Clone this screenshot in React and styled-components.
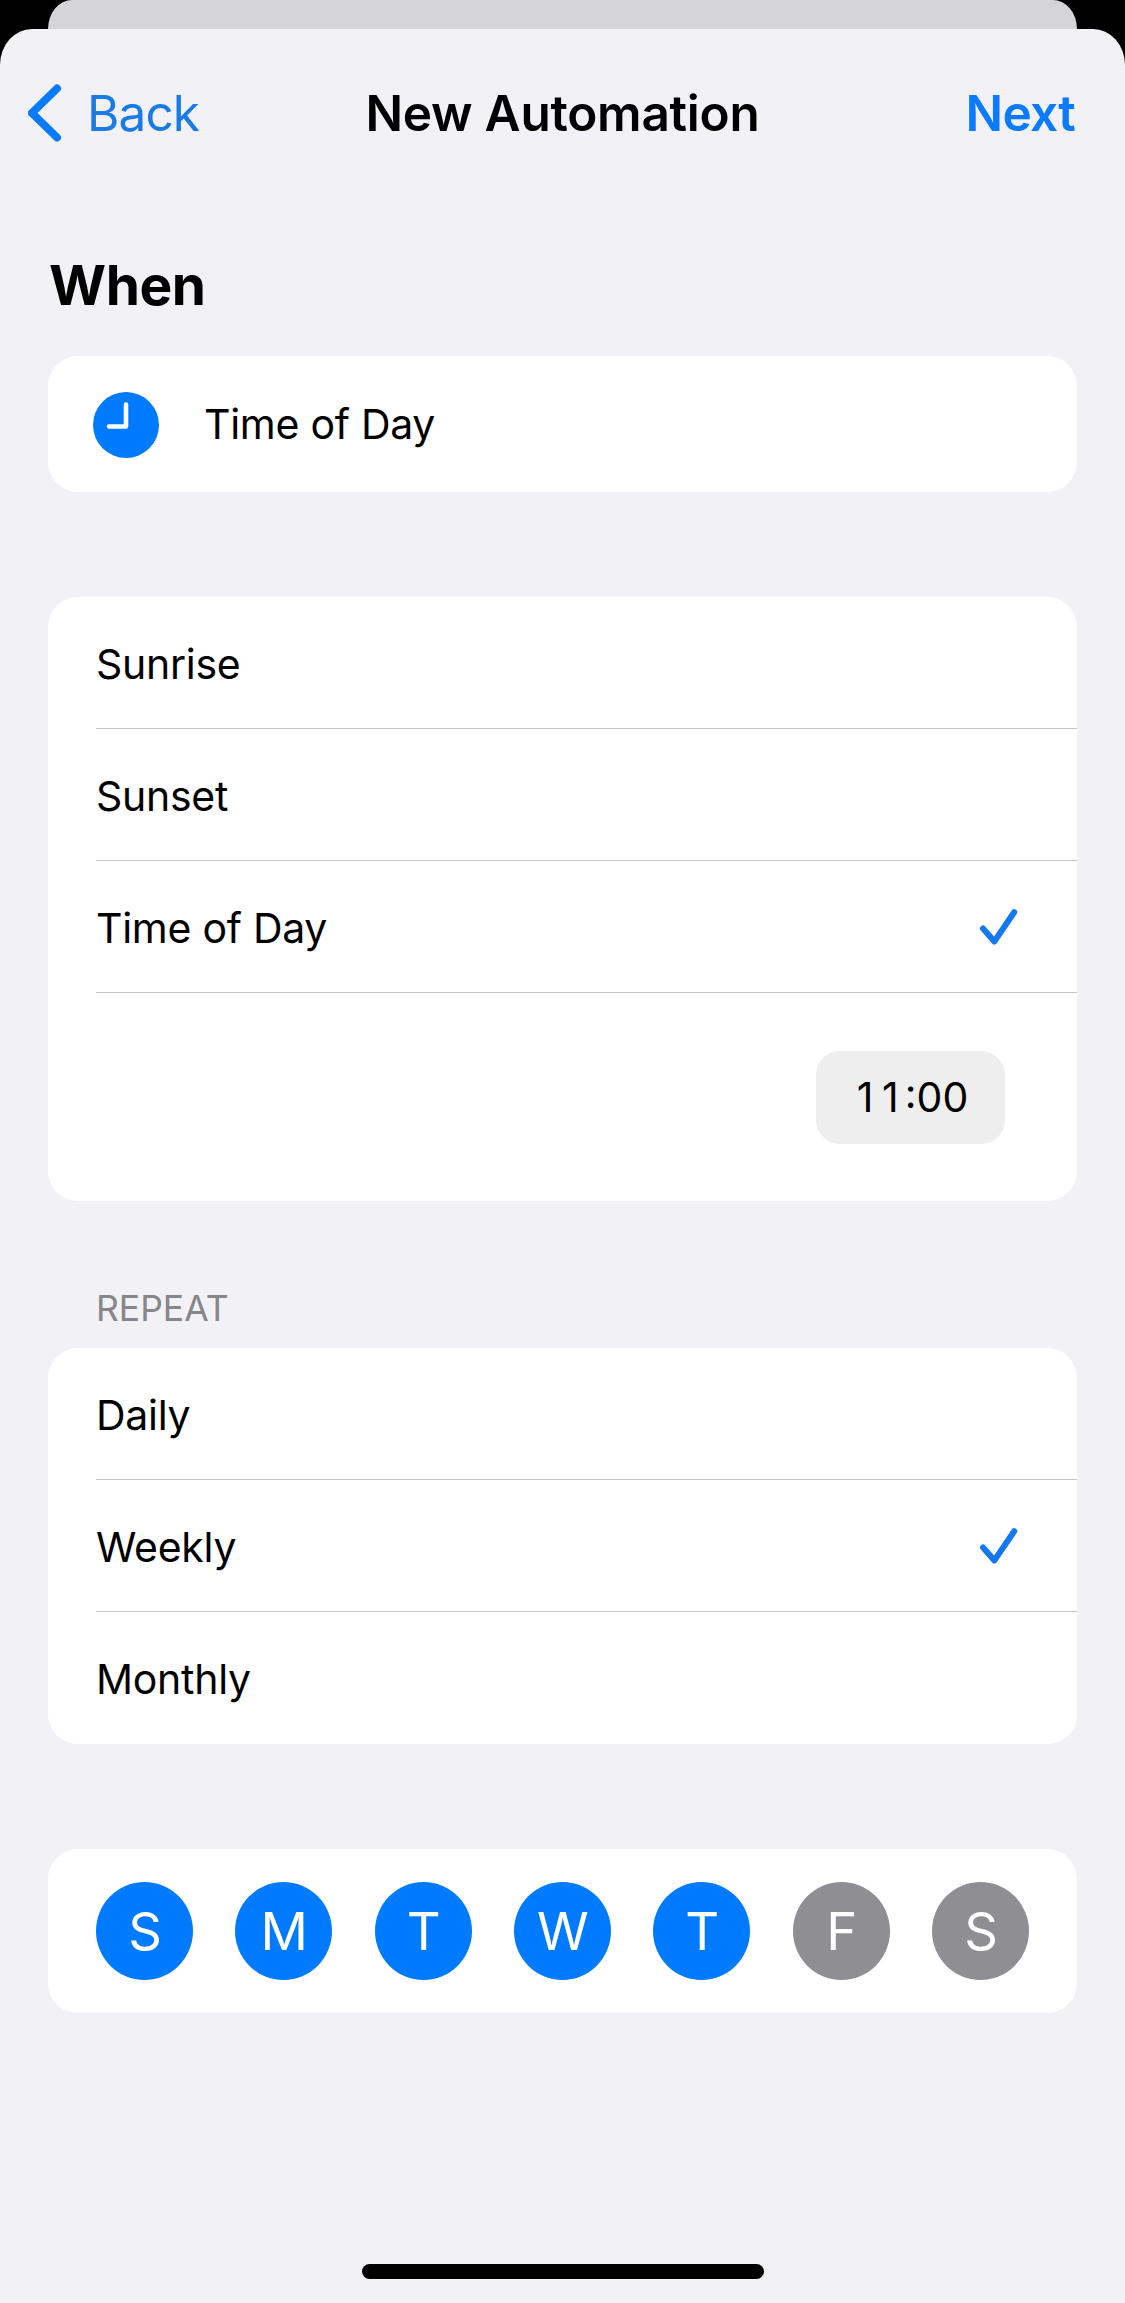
import React, { useState } from 'react'
import styled, { createGlobalStyle } from 'styled-components'

const GlobalStyle = createGlobalStyle`
  * {
    box-sizing: border-box;
  }
  body {
    margin: 0;
    background: #000;
    color: #000;
    font-family: Inter, 'Liberation Sans', sans-serif;
  }
  button {
    margin: 0;
    padding: 0;
    border: 0;
    background: none;
    color: inherit;
    font: inherit;
  }
`

// Layout
const Screen = styled.div`
  display: flex;
  flex-direction: column;
  width: 1125px;
  height: 2303px;
  overflow: hidden;
`

const BackSheet = styled.div`
  flex: none;
  height: 29px;
  margin: 0 48px;
  background: #d5d4d9;
  border-radius: 24px 24px 0 0 / 29px 29px 0 0;
`

const Sheet = styled.div`
  display: flex;
  flex-direction: column;
  flex: 1;
  background: #f2f1f6;
  border-radius: 32px 32px 0 0 / 36px 36px 0 0;
`

const Content = styled.main`
  flex: 1;
  padding: 0 48px;
`

// Header
const NavBar = styled.header`
  display: grid;
  grid-template-columns: 1fr auto 1fr;
  align-items: center;
  height: 168px;
  padding: 0 50px 0 28px;
  font-size: 49.5px;
  line-height: 60px;
`

const BackButton = styled.button`
  display: flex;
  align-items: center;
  gap: 25px;
  color: #1a7ae8;
  letter-spacing: -0.9px;
`

const NavTitle = styled.h1`
  margin: 0;
  padding-left: 22px;
  font-size: inherit;
  font-weight: 600;
  letter-spacing: -0.24px;
`

const NextButton = styled.button`
  justify-self: end;
  color: #0a7aff;
  font-weight: 600;
  letter-spacing: -0.7px;
`

// Sections
const SectionTitle = styled.h2`
  margin: 0;
  padding: 54px 1px 37px;
  font-size: 55px;
  font-weight: 700;
  line-height: 68px;
  letter-spacing: -0.4px;
`

const GroupLabel = styled.h3`
  margin: 0;
  padding: 86px 48px 17px;
  color: #86868b;
  font-size: 35.5px;
  font-weight: 400;
  line-height: 44px;
`

const Card = styled.section`
  margin-bottom: ${props => props.$gap || 0}px;
  background: #fff;
  border-radius: 30px;
  font-size: 41px;
  line-height: 50px;
  letter-spacing: -0.27px;
`

const Trigger = styled.div`
  display: flex;
  align-items: center;
  gap: 45px;
  height: 136px;
  padding-left: 45px;

  svg {
    margin-top: 2px;
  }
`

const Row = styled.button`
  display: flex;
  align-items: center;
  justify-content: space-between;
  width: 981px;
  height: 132px;
  margin-left: 48px;
  padding: 3px 59px 0 0;
  border-bottom: 1px solid ${props => (props.$last ? 'transparent' : '#c6c6c8')};
  letter-spacing: inherit;

  svg {
    margin-bottom: 2px;
  }
`

const TimeRow = styled.div`
  display: flex;
  align-items: center;
  justify-content: flex-end;
  height: 208px;
  padding: 1px 72px 0 0;
`

const TimePill = styled.button`
  width: 189px;
  height: 93px;
  padding: 0 0 1px 4px;
  background: #eee;
  border-radius: 24px;
  letter-spacing: 0;
  text-align: center;
  font-feature-settings: 'case' 1;
`

// Spaces the narrow ones out to the width of the other digits
const Hours = styled.span`
  letter-spacing: 8.6px;
  margin-right: -2.4px;
`

const Days = styled.div`
  display: flex;
  align-items: center;
  justify-content: space-between;
  height: 164px;
  padding: 0 48px;
`

const Day = styled.button`
  width: 97px;
  height: 98px;
  padding-left: 1px;
  border-radius: 50%;
  background: ${props => (props.$on ? '#007aff' : '#8e8e93')};
  color: #fff;
  font-size: 52.5px;
  line-height: 98px;
  letter-spacing: 0;
  text-align: center;
`

const HomeIndicator = styled.div`
  align-self: center;
  width: 402px;
  height: 15px;
  margin-bottom: 24px;
  background: #000;
  border-radius: 8px;
`

// Icons
const ChevronIcon = () => (
  <svg width="34" height="58" viewBox="0 0 34 58" fill="none">
    <path
      d="M29 4.5 3.9 29 29 53.5"
      stroke="#0a7aff"
      strokeWidth="8"
      strokeLinecap="round"
      strokeLinejoin="round"
    />
  </svg>
)

const ClockIcon = () => (
  <svg width="66" height="66" viewBox="0 0 66 66" fill="none">
    <circle cx="33" cy="33" r="33" fill="#007aff" />
    <path d="M33 12.5V34.5H16" stroke="#fff" strokeWidth="4.6" strokeLinecap="round" strokeLinejoin="round" />
  </svg>
)

const CheckIcon = () => (
  <svg width="38" height="38" viewBox="0 0 38 38" fill="none">
    <path
      d="M3 20.5 14.4 33.4 34.2 4.2"
      stroke="#1478f0"
      strokeWidth="6"
      strokeLinecap="round"
      strokeLinejoin="round"
    />
  </svg>
)

const times = ['Sunrise', 'Sunset', 'Time of Day']
const repeats = ['Daily', 'Weekly', 'Monthly']
const days = ['S', 'M', 'T', 'W', 'T', 'F', 'S']

const App = () => {
  const [time, setTime] = useState('Time of Day')
  const [repeat, setRepeat] = useState('Weekly')
  const [active, setActive] = useState([0, 1, 2, 3, 4])

  const toggleDay = i => setActive(active.includes(i) ? active.filter(d => d !== i) : [...active, i])

  return (
    <Screen>
      <GlobalStyle />
      <BackSheet />
      <Sheet>
        <NavBar>
          <BackButton>
            <ChevronIcon />
            Back
          </BackButton>
          <NavTitle>New Automation</NavTitle>
          <NextButton>Next</NextButton>
        </NavBar>
        <Content>
          <SectionTitle>When</SectionTitle>
          <Card $gap={105}>
            <Trigger>
              <ClockIcon />
              Time of Day
            </Trigger>
          </Card>
          <Card>
            {times.map(label => (
              <Row key={label} onClick={() => setTime(label)}>
                {label}
                {time === label && <CheckIcon />}
              </Row>
            ))}
            <TimeRow>
              <TimePill>
                <Hours>11</Hours>:00
              </TimePill>
            </TimeRow>
          </Card>
          <GroupLabel>REPEAT</GroupLabel>
          <Card $gap={105}>
            {repeats.map((label, i) => (
              <Row key={label} $last={i === repeats.length - 1} onClick={() => setRepeat(label)}>
                {label}
                {repeat === label && <CheckIcon />}
              </Row>
            ))}
          </Card>
          <Card>
            <Days>
              {days.map((day, i) => (
                <Day key={i} $on={active.includes(i)} onClick={() => toggleDay(i)}>
                  {day}
                </Day>
              ))}
            </Days>
          </Card>
        </Content>
        <HomeIndicator />
      </Sheet>
    </Screen>
  )
}

export default App
